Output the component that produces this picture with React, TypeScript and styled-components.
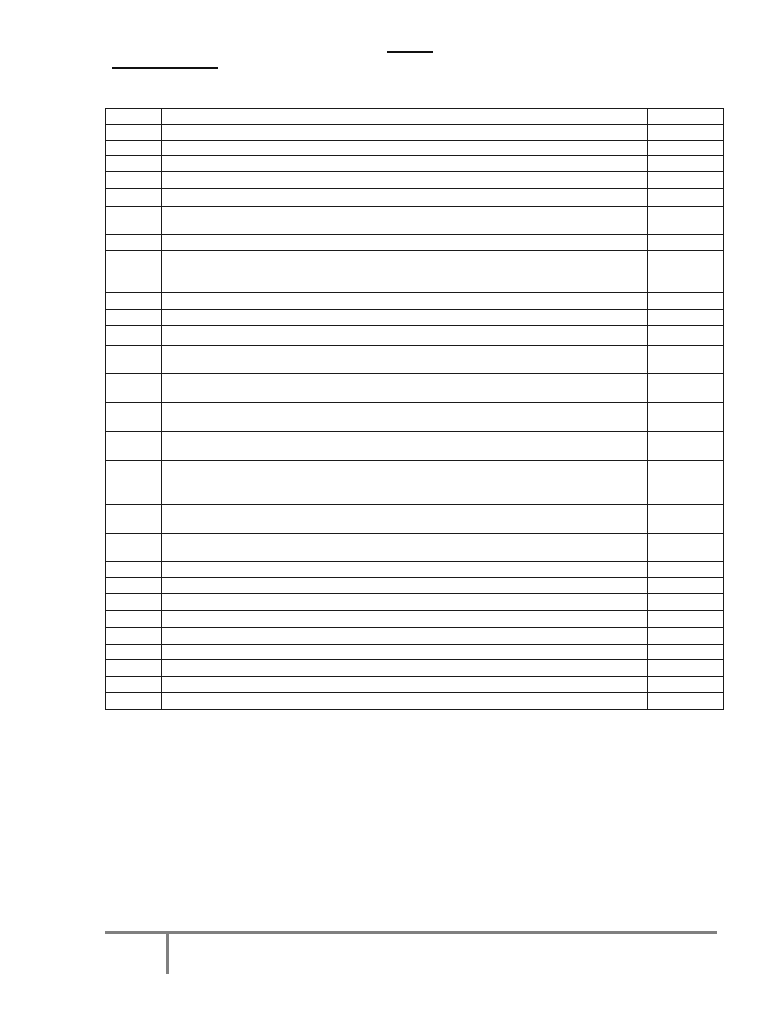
import styled, { createGlobalStyle } from 'styled-components';

const GlobalStyle = createGlobalStyle`
	html, body {
		margin: 0;
		padding: 0;
		background: #ffffff;
		font-family: "Liberation Sans", Arial, sans-serif;
	}
`;

// row heights in px, top to bottom
const rowHeights = [
	16, 16, 15, 16, 17, 18, 28, 16, 42, 17, 16, 20, 28, 29,
	29, 29, 44, 29, 28, 16, 16, 17, 17, 17, 15, 17, 16, 17,
];

export default function App() {
	return (
		<StyledPage>
			<GlobalStyle />
			<StyledHeader>
				<StyledTitle aria-label="Title">&nbsp;</StyledTitle>
				<StyledSubtitle aria-label="Subtitle">&nbsp;</StyledSubtitle>
			</StyledHeader>
			<StyledTable role="table">
				{rowHeights.map((h, i) => (
					<StyledRow key={i} $h={h} role="row">
						<StyledCell role="cell" />
						<StyledCell role="cell" />
						<StyledCell role="cell" />
					</StyledRow>
				))}
			</StyledTable>
			<StyledFooter>
				<StyledFooterRule />
				<StyledFooterBody>
					<StyledFooterNumber />
					<StyledFooterDivider />
				</StyledFooterBody>
			</StyledFooter>
		</StyledPage>
	);
}

const StyledPage = styled.div`
	width: 768px;
	height: 1024px;
	display: flex;
	flex-direction: column;
	box-sizing: border-box;
	padding-top: 38px;
`;

const StyledHeader = styled.div`
	display: flex;
	flex-direction: column;
	height: 70px;
`;

const StyledTitle = styled.span`
	display: block;
	width: 46px;
	height: 13px;
	margin-left: 387px;
	border-bottom: 2px solid #111;
	font-size: 12px;
	font-weight: bold;
`;

const StyledSubtitle = styled.span`
	display: block;
	width: 106px;
	height: 14px;
	margin-left: 112px;
	border-bottom: 2px solid #111;
	font-size: 12px;
	font-weight: bold;
`;

const StyledTable = styled.div`
	display: flex;
	flex-direction: column;
	margin-left: 105px;
	width: 619px;
	border-top: 1px solid #1a1a1a;
	border-left: 1px solid #1a1a1a;
	box-sizing: border-box;
`;

const StyledRow = styled.div<{ $h: number }>`
	display: grid;
	grid-template-columns: 56px 486px 76px;
	height: ${p => p.$h}px;
`;

const StyledCell = styled.div`
	box-sizing: border-box;
	border-right: 1px solid #1a1a1a;
	border-bottom: 1px solid #1a1a1a;
	font-size: 10px;
`;

const StyledFooter = styled.div`
	margin-top: 221px;
	margin-left: 105px;
	width: 612px;
	display: flex;
	flex-direction: column;
`;

const StyledFooterRule = styled.div`
	height: 3px;
	background: #808080;
`;

const StyledFooterBody = styled.div`
	display: flex;
	height: 40px;
`;

const StyledFooterNumber = styled.div`
	width: 61px;
`;

const StyledFooterDivider = styled.div`
	width: 3px;
	background: #808080;
`;
